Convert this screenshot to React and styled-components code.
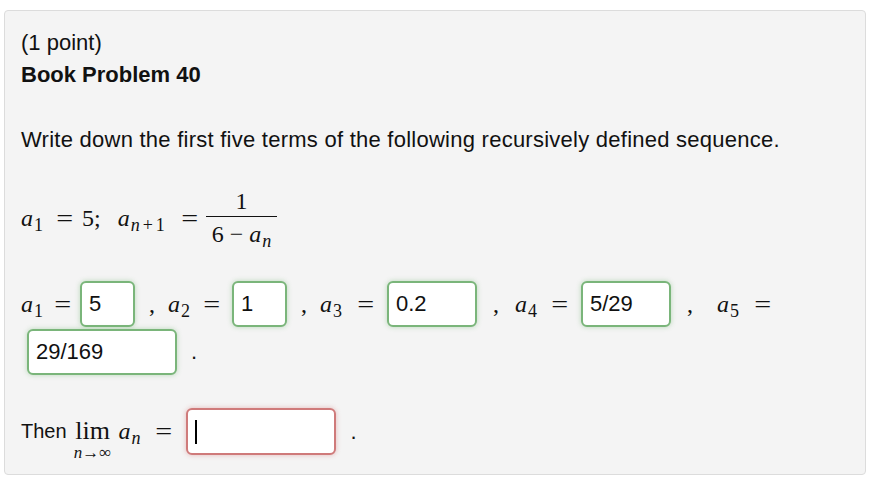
import styled, { createGlobalStyle } from "styled-components";

const GlobalStyle = createGlobalStyle`
  html, body {
    margin: 0;
    padding: 0;
    background: #ffffff;
  }
  body {
    font-family: "Liberation Sans", Arial, sans-serif;
    color: #111;
  }
`;

const Panel = styled.div`
  margin: 10px 12px 0 4px;
  padding: 16px 16px 19px;
  background: #f4f4f4;
  border: 1px solid #dcdcdc;
  border-radius: 4px;
  font-size: 22px;
`;

const Line = styled.div`
  line-height: 32px;
  margin-top: ${(p) => p.$gap || 0}px;
  font-weight: ${(p) => (p.$bold ? 700 : 400)};
  letter-spacing: ${(p) => p.$track || 0}px;
`;

const MathRow = styled.div`
  display: flex;
  align-items: center;
  height: ${(p) => p.$h || 46}px;
  margin-top: ${(p) => p.$gap || 0}px;
  padding-left: ${(p) => p.$indent || 0}px;
`;

const M = styled.span`
  font-family: "Liberation Serif", "Times New Roman", serif;
  font-size: 24px;
  white-space: nowrap;
  display: inline-flex;
  align-items: baseline;
  justify-content: ${(p) => (p.$w ? "space-between" : "flex-start")};
  width: ${(p) => (p.$w ? `${p.$w}px` : "auto")};
  margin-left: ${(p) => p.$ml || 0}px;
  margin-right: ${(p) => p.$mr || 0}px;
  flex-shrink: 0;
`;

const V = styled.i`
  font-style: italic;
`;

const Sub = styled.sub`
  font-size: 18px;
  vertical-align: -5px;
  line-height: 0;
  margin-left: 1px;
  font-style: ${(p) => (p.$italic ? "italic" : "normal")};
`;

const Plus = styled.span`
  font-style: normal;
  margin: 0 3px;
`;

const Eq = styled.span`
  display: inline-block;
  transform: scaleX(1.25);
`;

const Comma = styled.span`
  font-family: "Liberation Serif", serif;
  font-size: 24px;
  width: ${(p) => p.$w}px;
  padding-left: ${(p) => p.$left ?? 14}px;
  box-sizing: border-box;
  flex-shrink: 0;
`;

const Frac = styled.span`
  display: inline-flex;
  flex-direction: column;
  align-items: center;
  align-self: center;
  margin-left: 9px;
`;

const Num = styled.span`
  padding: 0 6px 3px;
  line-height: 24px;
`;

const Den = styled.span`
  border-top: 1px solid #111;
  padding: 3px 6px 0;
  line-height: 28px;
`;

const Answer = styled.div`
  box-sizing: border-box;
  width: ${(p) => p.$w}px;
  height: ${(p) => p.$h || 46}px;
  background: #fff;
  border: 2px solid ${(p) => (p.$wrong ? "#cf7a7a" : "#7ab57a")};
  border-radius: 6px;
  box-shadow: 0 0 5px
    ${(p) => (p.$wrong ? "rgba(210, 110, 110, 0.45)" : "rgba(110, 180, 110, 0.45)")};
  display: flex;
  align-items: center;
  padding-left: 7px;
  font-family: "Liberation Sans", Arial, sans-serif;
  font-size: 22px;
  flex-shrink: 0;
`;

const Caret = styled.span`
  width: 2px;
  height: 24px;
  background: #000;
`;

const Period = styled.span`
  margin-left: ${(p) => p.$left ?? 14}px;
  font-size: 22px;
`;

const Lim = styled.span`
  display: inline-flex;
  flex-direction: column;
  align-items: center;
  gap: 3px;
  width: 44px;
  margin-left: 4px;
  position: relative;
  top: 7px;
  flex-shrink: 0;
`;

const LimWord = styled.span`
  font-family: "Liberation Serif", serif;
  font-size: 26px;
  line-height: 24px;
`;

const LimUnder = styled.span`
  font-family: "Liberation Serif", serif;
  font-size: 17px;
  line-height: 13px;
  font-style: italic;
`;

const Upright = styled.span`
  font-style: normal;
`;

const ThenText = styled.span`
  font-size: 20px;
  flex-shrink: 0;
`;

function Term({ i, w, mr = 11, ml = 0, italic = false }) {
  return (
    <M $w={w} $mr={mr} $ml={ml}>
      <span>
        <V>a</V>
        <Sub $italic={italic}>{i}</Sub>
      </span>
      <Eq>=</Eq>
    </M>
  );
}

export default function App() {
  return (
    <>
      <GlobalStyle />
      <Panel>
        <Line>(1 point)</Line>
        <Line $bold>Book Problem 40</Line>
        <Line $gap={33} $track={0.25}>
          Write down the first five terms of the following recursively defined
          sequence.
        </Line>

        <MathRow $gap={30} $h={64}>
          <Term i={1} w={51} mr={10} />
          <M $mr={17}>5;</M>
          <Term
            italic
            w={79}
            mr={0}
            i={
              <>
                n<Plus>+</Plus>
                <Upright>1</Upright>
              </>
            }
          />
          <M>
            <Frac>
              <Num>1</Num>
              <Den>
                6 − <V>a</V>
                <Sub $italic>n</Sub>
              </Den>
            </Frac>
          </M>
        </MathRow>

        <MathRow $gap={31}>
          <Term i={1} w={49} mr={10} />
          <Answer $w={55}>5</Answer>
          <Comma $w={33}>,</Comma>
          <Term i={2} w={51} mr={13} />
          <Answer $w={55}>1</Answer>
          <Comma $w={33}>,</Comma>
          <Term i={3} w={53} mr={14} />
          <Answer $w={90}>0.2</Answer>
          <Comma $w={38} $left={16}>,</Comma>
          <Term i={4} w={52} mr={14} />
          <Answer $w={90}>5/29</Answer>
          <Comma $w={46} $left={16}>,</Comma>
          <Term i={5} w={53} mr={0} />
        </MathRow>
        <MathRow $gap={2} $indent={6}>
          <Answer $w={150}>29/169</Answer>
          <Period>.</Period>
        </MathRow>

        <MathRow $gap={33} $h={47}>
          <ThenText>Then</ThenText>
          <Lim>
            <LimWord>lim</LimWord>
            <LimUnder>
              n<Upright>→∞</Upright>
            </LimUnder>
          </Lim>
          <Term i="n" italic w={52} ml={4} mr={15} />
          <Answer $w={150} $h={47} $wrong>
            <Caret />
          </Answer>
          <Period $left={15}>.</Period>
        </MathRow>
      </Panel>
    </>
  );
}
